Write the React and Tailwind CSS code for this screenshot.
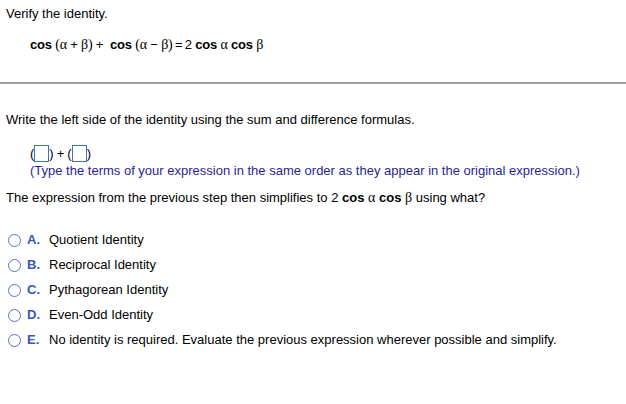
import React from 'react'

function Greek({ children }) {
    return <span className="font-['Liberation_Serif',serif] text-[14px]">{children}</span>
}

function Box() {
    return <span className="inline-block w-[15px] h-[17px] border border-[#3d6fcf] bg-white" />
}

const options = [
    ['A.', 'Quotient Identity'],
    ['B.', 'Reciprocal Identity'],
    ['C.', 'Pythagorean Identity'],
    ['D.', 'Even-Odd Identity'],
    ['E.', 'No identity is required. Evaluate the previous expression wherever possible and simplify.'],
]

export default function App() {
    return (
        <div className="w-[626px] h-[404px] bg-white text-black text-[13px] leading-[16px] font-['Liberation_Sans',Arial,sans-serif]">
            <div className="px-[6px] pt-[6px]">
                <div>Verify the identity.</div>
                <div className="pl-[24px] mt-[15px] tracking-[-0.2px]">
                    <span className="font-bold">cos</span> <Greek>(α</Greek> + <Greek>β)</Greek> +&nbsp; <span className="font-bold">cos</span> <Greek>(α</Greek> − <Greek>β)</Greek>{'\u2009'}={'\u2009'}2 <span className="font-bold">cos</span> <Greek>α</Greek> <span className="font-bold">cos</span> <Greek>β</Greek>
                </div>
            </div>
            <div className="mt-[29px] h-[2px] bg-[#a0a0a0]" />
            <div className="px-[6px]">
                <div className="mt-[28px]">Write the left side of the identity using the sum and difference formulas.</div>
                <div className="pl-[24px] mt-[16px] flex items-center h-[19px]">
                    <span>(</span><Box /><span>)</span><span className="mx-[3px]">+</span><span>(</span><Box /><span>)</span>
                </div>
                <div className="pl-[24px] text-[#2a1f8f]">(Type the terms of your expression in the same order as they appear in the original expression.)</div>
                <div className="mt-[11px]">The expression from the previous step then simplifies to 2 <span className="font-bold">cos</span> <Greek>α</Greek> <span className="font-bold">cos</span> <Greek>β</Greek> using what?</div>
                <div className="mt-[26px] flex flex-col gap-[9px]">
                    {options.map(([letter, text]) => (
                        <div key={letter} className="flex items-center h-[16px]">
                            <span className="w-[13px] h-[13px] ml-[2px] rounded-full border border-[#5b6fd0]" />
                            <span className="ml-[6px] w-[22px] font-bold text-[#3a55c4]">{letter}</span>
                            <span>{text}</span>
                        </div>
                    ))}
                </div>
            </div>
        </div>
    )
}
